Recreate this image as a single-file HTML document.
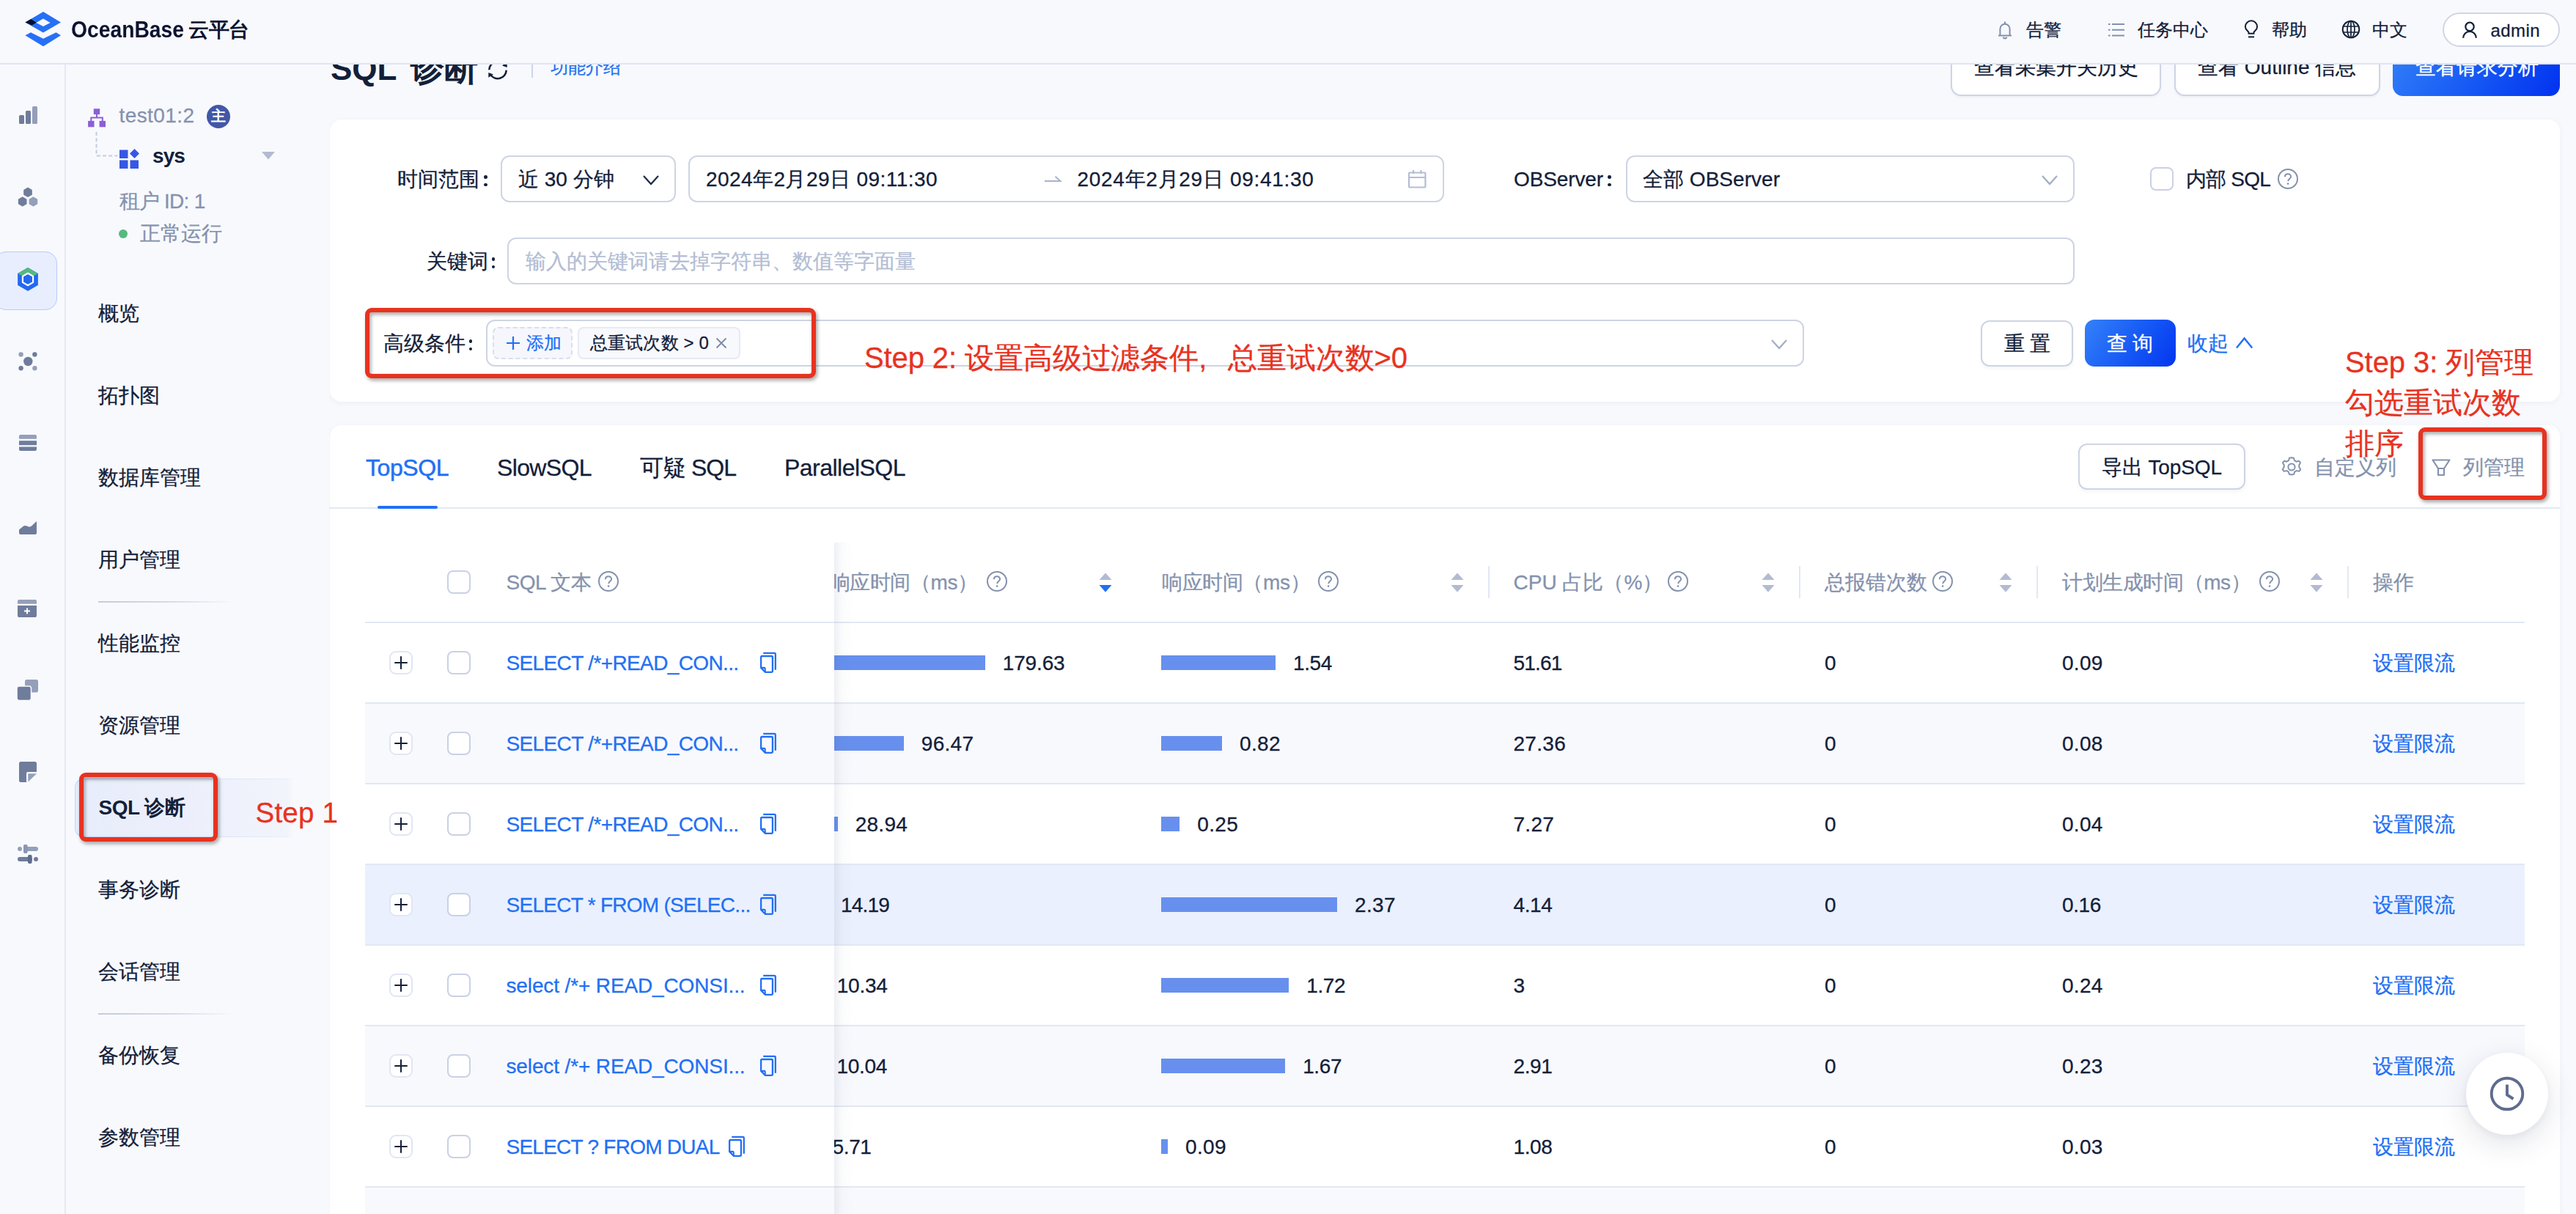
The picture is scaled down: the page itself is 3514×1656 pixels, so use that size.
<!DOCTYPE html>
<html lang="zh"><head><meta charset="utf-8"><title>OceanBase 云平台 - SQL 诊断</title>
<style>
html,body{margin:0;padding:0;width:3514px;height:1656px;overflow:hidden;background:#f8f9fd;}
body{font-family:"Liberation Sans",sans-serif;}
.root{position:relative;width:3514px;height:1656px;overflow:hidden;}
.b{position:absolute;display:block}
.t{position:absolute;white-space:nowrap;display:block;-webkit-text-stroke:0.28px currentColor}
</style></head>
<body>
<div class="root">
<span class="t" style="left:451px;top:65px;font-size:44px;line-height:56px;color:#132039;font-weight:700;-webkit-text-stroke:0;word-spacing:7px;">SQL <span style="font-size:46px">诊断</span></span>
<svg class="b" style="left:664px;top:81px;" width="30" height="30" viewBox="0 0 30 30"><path d="M26.7 14.8 A11.7 11.7 0 0 1 5 20.6" fill="none" stroke="#132039" stroke-width="2.6"/><path d="M2.3 18 V24.8 L9 20.4 Z" fill="#132039"/><path d="M3.3 14.2 A11.7 11.7 0 0 1 25 8.4" fill="none" stroke="#132039" stroke-width="2.6"/><path d="M27.7 11 V4.2 L21 8.6 Z" fill="#132039"/></svg>
<div class="b" style="left:725px;top:80px;width:2px;height:26px;background:#cdd4e4;"></div>
<span class="t" style="left:751px;top:75px;font-size:24px;line-height:34px;color:#2270f4;">功能介绍</span>
<div class="b" style="left:2661px;top:55px;width:287px;height:76px;box-sizing:border-box;border:2px solid #cdd4e4;border-radius:14px;background:#fff;box-shadow:0 2px 3px rgba(30,50,100,.05);"></div>
<span class="t" style="left:2693px;top:72px;font-size:28px;line-height:39px;color:#132039;">查看采集开关历史</span>
<div class="b" style="left:2966px;top:55px;width:281px;height:76px;box-sizing:border-box;border:2px solid #cdd4e4;border-radius:14px;background:#fff;box-shadow:0 2px 3px rgba(30,50,100,.05);"></div>
<span class="t" style="left:2998px;top:72px;font-size:28px;line-height:39px;color:#132039;">查看 Outline 信息</span>
<div class="b" style="left:3264px;top:55px;width:228px;height:76px;border-radius:14px;background:linear-gradient(120deg,#3280f8 0%,#1252f4 60%,#0232ef 100%);"></div>
<span class="t" style="left:3295px;top:72px;font-size:28px;line-height:39px;color:#fff;">查看请求分析</span>
<div class="b" style="left:449.5px;top:163px;width:3042.5px;height:385px;background:#fff;border-radius:16px;box-shadow:0 2px 8px rgba(40,60,120,.05);"></div>
<span class="t" style="left:542px;top:224.5px;font-size:28px;line-height:39px;color:#132039;">时间范围</span>
<div class="b" style="left:660.3px;top:239.4px;width:4.6px;height:4.6px;border-radius:50%;background:#132039;"></div>
<div class="b" style="left:660.3px;top:249.8px;width:4.6px;height:4.6px;border-radius:50%;background:#132039;"></div>
<div class="b" style="left:683px;top:212px;width:239px;height:64px;box-sizing:border-box;border:2px solid #cdd4e4;border-radius:12px;background:#fff;"></div>
<span class="t" style="left:707px;top:224.5px;font-size:28px;line-height:39px;color:#132039;">近 30 分钟</span>
<svg class="b" style="left:876px;top:237.5px;" width="24" height="15" viewBox="0 0 24 15"><path d="M2 2 L12 13 L22 2" fill="none" stroke="#1f2c47" stroke-width="2.2"/></svg>
<div class="b" style="left:939px;top:212px;width:1031px;height:64px;box-sizing:border-box;border:2px solid #cdd4e4;border-radius:12px;background:#fff;"></div>
<span class="t" style="letter-spacing:0.437px;left:963px;top:224.5px;font-size:28px;line-height:39px;color:#132039;">2024年2月29日 09:11:30</span>
<svg class="b" style="left:1424px;top:234px;" width="28" height="20" viewBox="0 0 28 20"><path d="M1 13 H22.5 L15.5 6.8" fill="none" stroke="#a9b3cb" stroke-width="2"/></svg>
<span class="t" style="letter-spacing:0.696px;left:1469.5px;top:224.5px;font-size:28px;line-height:39px;color:#132039;">2024年2月29日 09:41:30</span>
<svg class="b" style="left:1919px;top:230px;" width="28" height="28" viewBox="0 0 28 28"><rect x="3" y="5.5" width="22.4" height="20" rx="1" fill="none" stroke="#b3bdd4" stroke-width="2.2"/><path d="M3 12 H25.4 M9 2 V7 M19.4 2 V7" fill="none" stroke="#b3bdd4" stroke-width="2.2"/></svg>
<span class="t" style="letter-spacing:-0.117px;left:2065px;top:224.5px;font-size:28px;line-height:39px;color:#132039;">OBServer</span>
<div class="b" style="left:2193.2px;top:239.4px;width:4.6px;height:4.6px;border-radius:50%;background:#132039;"></div>
<div class="b" style="left:2193.2px;top:249.8px;width:4.6px;height:4.6px;border-radius:50%;background:#132039;"></div>
<div class="b" style="left:2217.5px;top:212px;width:612.5px;height:64px;box-sizing:border-box;border:2px solid #cdd4e4;border-radius:12px;background:#fff;"></div>
<span class="t" style="letter-spacing:0.027px;left:2241px;top:224.5px;font-size:28px;line-height:39px;color:#132039;">全部 OBServer</span>
<svg class="b" style="left:2784px;top:237.5px;" width="24" height="15" viewBox="0 0 24 15"><path d="M2 2 L12 13 L22 2" fill="none" stroke="#a3adc6" stroke-width="2.2"/></svg>
<div class="b" style="left:2933px;top:228px;width:32px;height:32px;box-sizing:border-box;border:2.2px solid #c9d1e4;border-radius:8px;background:#fff;"></div>
<span class="t" style="letter-spacing:-0.802px;left:2982px;top:224.5px;font-size:28px;line-height:39px;color:#132039;">内部 SQL</span>
<svg class="b" style="left:3106px;top:229px;" width="30" height="30" viewBox="0 0 30 30"><circle cx="15" cy="15" r="13" fill="none" stroke="#8592ad" stroke-width="2"/><path d="M10.9 12.2c0-2.4 1.8-3.9 4.1-3.9s4.1 1.5 4.1 3.7c0 2.6-3.6 3-3.9 6.1" fill="none" stroke="#8592ad" stroke-width="2"/><circle cx="15.1" cy="21.6" r="1.3" fill="#8592ad"/></svg>
<span class="t" style="left:581.5px;top:336.5px;font-size:28px;line-height:39px;color:#132039;">关键词</span>
<div class="b" style="left:670.9px;top:351.4px;width:4.6px;height:4.6px;border-radius:50%;background:#132039;"></div>
<div class="b" style="left:670.9px;top:361.8px;width:4.6px;height:4.6px;border-radius:50%;background:#132039;"></div>
<div class="b" style="left:692px;top:324px;width:2138px;height:64px;box-sizing:border-box;border:2px solid #cdd4e4;border-radius:12px;background:#fff;"></div>
<span class="t" style="left:717px;top:336.5px;font-size:28px;line-height:39px;color:#b3bdd4;">输入的关键词请去掉字符串、数值等字面量</span>
<span class="t" style="left:523px;top:448.5px;font-size:28px;line-height:39px;color:#132039;">高级条件</span>
<div class="b" style="left:639.7px;top:463.4px;width:4.6px;height:4.6px;border-radius:50%;background:#132039;"></div>
<div class="b" style="left:639.7px;top:473.8px;width:4.6px;height:4.6px;border-radius:50%;background:#132039;"></div>
<div class="b" style="left:662.5px;top:436px;width:1798.5px;height:64px;box-sizing:border-box;border:2px solid #cdd4e4;border-radius:12px;background:#fff;"></div>
<div class="b" style="left:672px;top:446px;width:109px;height:44px;box-sizing:border-box;border:2px dashed #d8deec;border-radius:8px;background:#f5f7fd;"></div>
<svg class="b" style="left:690px;top:458px;" width="20" height="20" viewBox="0 0 20 20"><path d="M10 1 V19 M1 10 H19" stroke="#2270f4" stroke-width="2.2"/></svg>
<span class="t" style="left:718px;top:451px;font-size:24px;line-height:34px;color:#2270f4;">添加</span>
<div class="b" style="left:788px;top:446px;width:221.5px;height:44px;box-sizing:border-box;border:2px solid #e6eaf4;border-radius:8px;background:#f8f9fd;"></div>
<span class="t" style="letter-spacing:0.144px;left:805px;top:451px;font-size:24px;line-height:34px;color:#132039;">总重试次数 &gt; 0</span>
<svg class="b" style="left:976px;top:460px;" width="16" height="16" viewBox="0 0 16 16"><path d="M1.5 1.5 L14.5 14.5 M14.5 1.5 L1.5 14.5" stroke="#7d89a6" stroke-width="1.8"/></svg>
<svg class="b" style="left:2415px;top:461.5px;" width="24" height="15" viewBox="0 0 24 15"><path d="M2 2 L12 13 L22 2" fill="none" stroke="#a3adc6" stroke-width="2.2"/></svg>
<div class="b" style="left:2702px;top:437px;width:126px;height:63px;box-sizing:border-box;border:2px solid #cdd4e4;border-radius:12px;background:#fff;box-shadow:0 3px 4px rgba(30,50,100,.05);"></div>
<span class="t" style="letter-spacing:-0.594px;left:2734px;top:448.5px;font-size:28px;line-height:39px;color:#132039;">重 置</span>
<div class="b" style="left:2844px;top:436px;width:124px;height:64px;border-radius:13px;background:linear-gradient(125deg,#3582f8 0%,#1558f5 55%,#0335f0 100%);"></div>
<span class="t" style="letter-spacing:-0.260px;left:2874px;top:448.5px;font-size:28px;line-height:39px;color:#fff;">查 询</span>
<span class="t" style="left:2984.3px;top:448.5px;font-size:28px;line-height:39px;color:#2270f4;">收起</span>
<svg class="b" style="left:3049px;top:456px;" width="28" height="20" viewBox="0 0 28 20"><path d="M2 18.5 L12.6 5.5 L23.2 18.5" fill="none" stroke="#2270f4" stroke-width="2.5"/></svg>
<div class="b" style="left:449.5px;top:580px;width:3042.5px;height:1120px;background:#fff;border-radius:16px;box-shadow:0 2px 8px rgba(40,60,120,.05);"></div>
<span class="t" style="letter-spacing:-0.438px;left:499px;top:615.5px;font-size:32px;line-height:45px;color:#2270f4;-webkit-text-stroke:0.5px #2270f4;">TopSQL</span>
<span class="t" style="letter-spacing:-0.627px;left:678px;top:615.5px;font-size:32px;line-height:45px;color:#132039;">SlowSQL</span>
<span class="t" style="letter-spacing:-0.987px;left:873px;top:615.5px;font-size:32px;line-height:45px;color:#132039;">可疑 SQL</span>
<span class="t" style="letter-spacing:-0.523px;left:1070px;top:615.5px;font-size:32px;line-height:45px;color:#132039;">ParallelSQL</span>
<div class="b" style="left:449px;top:692px;width:3043px;height:2px;background:#e2e8f3;"></div>
<div class="b" style="left:514.5px;top:690px;width:82.5px;height:4px;background:#2270f4;border-radius:2px;"></div>
<div class="b" style="left:2834.5px;top:605px;width:228.5px;height:63px;box-sizing:border-box;border:2px solid #cdd4e4;border-radius:12px;background:#fff;box-shadow:0 3px 4px rgba(30,50,100,.05);"></div>
<span class="t" style="letter-spacing:-0.106px;left:2867px;top:617.5px;font-size:28px;line-height:39px;color:#132039;">导出 TopSQL</span>
<svg class="b" style="left:3111px;top:622px;" width="30" height="30" viewBox="0 0 30 30"><path d="M15 2.2 l3 0.6 1 3.4 2.6 1.5 3.4-0.9 2 2.4-1.7 3.1 0 3 1.9 3-1.9 2.6-3.5-0.8-2.6 1.5-1.1 3.4-3.1 0.6-3.1-0.6-1.1-3.4-2.6-1.5-3.5 0.8-1.9-2.6 1.9-3 0-3-1.7-3.1 2-2.4 3.4 0.9 2.6-1.5 1-3.4 Z" fill="none" stroke="#8592ad" stroke-width="2" stroke-linejoin="round"/><circle cx="15" cy="15" r="4.6" fill="none" stroke="#8592ad" stroke-width="2"/></svg>
<span class="t" style="left:3156.5px;top:617.5px;font-size:28px;line-height:39px;color:#8592ad;">自定义列</span>
<svg class="b" style="left:3316px;top:624px;" width="28" height="28" viewBox="0 0 28 28"><path d="M2.5 3.5 H25.5 L18 15 H10 Z M10 15 V24 H18 V15" fill="none" stroke="#8592ad" stroke-width="2.2" stroke-linejoin="round"/></svg>
<span class="t" style="left:3360px;top:617.5px;font-size:28px;line-height:39px;color:#8592ad;">列管理</span>
<div class="b" style="left:498px;top:849px;width:2946px;height:110px;background:#fff;"></div>
<div class="b" style="left:498px;top:959px;width:2946px;height:110px;background:#f8f9fd;"></div>
<div class="b" style="left:498px;top:1069px;width:2946px;height:110px;background:#fff;"></div>
<div class="b" style="left:498px;top:1179px;width:2946px;height:110px;background:#eaf0fd;"></div>
<div class="b" style="left:498px;top:1289px;width:2946px;height:110px;background:#fff;"></div>
<div class="b" style="left:498px;top:1399px;width:2946px;height:110px;background:#f8f9fd;"></div>
<div class="b" style="left:498px;top:1509px;width:2946px;height:110px;background:#fff;"></div>
<div class="b" style="left:498px;top:1619px;width:2946px;height:110px;background:#f8f9fd;"></div>
<div class="b" style="left:498px;top:848px;width:2946px;height:2px;background:#e2e8f3;"></div>
<div class="b" style="left:498px;top:958px;width:2946px;height:2px;background:#e2e8f3;"></div>
<div class="b" style="left:498px;top:1068px;width:2946px;height:2px;background:#e2e8f3;"></div>
<div class="b" style="left:498px;top:1178px;width:2946px;height:2px;background:#e2e8f3;"></div>
<div class="b" style="left:498px;top:1288px;width:2946px;height:2px;background:#e2e8f3;"></div>
<div class="b" style="left:498px;top:1398px;width:2946px;height:2px;background:#e2e8f3;"></div>
<div class="b" style="left:498px;top:1508px;width:2946px;height:2px;background:#e2e8f3;"></div>
<div class="b" style="left:498px;top:1618px;width:2946px;height:2px;background:#e2e8f3;"></div>
<div class="b" style="left:498px;top:1728px;width:2946px;height:2px;background:#e2e8f3;"></div>
<span class="t" style="left:1104px;top:774.5px;font-size:28px;line-height:39px;color:#8592ad;letter-spacing:-0.4px;">总响应时间（ms）</span>
<svg class="b" style="left:1345px;top:778px;" width="30" height="30" viewBox="0 0 30 30"><circle cx="15" cy="15" r="13" fill="none" stroke="#8592ad" stroke-width="2"/><path d="M10.9 12.2c0-2.4 1.8-3.9 4.1-3.9s4.1 1.5 4.1 3.7c0 2.6-3.6 3-3.9 6.1" fill="none" stroke="#8592ad" stroke-width="2"/><circle cx="15.1" cy="21.6" r="1.3" fill="#8592ad"/></svg>
<svg class="b" style="left:1499px;top:781px;" width="18" height="28" viewBox="0 0 18 28"><path d="M9 0.4 L17.5 10 H0.5 Z" fill="#b3bbd1"/><path d="M0.5 17 H17.5 L9 26.8 Z" fill="#2270f4"/></svg>
<span class="t" style="left:1585px;top:774.5px;font-size:28px;line-height:39px;color:#8592ad;letter-spacing:-0.4px;">响应时间（ms）</span>
<svg class="b" style="left:1797px;top:778px;" width="30" height="30" viewBox="0 0 30 30"><circle cx="15" cy="15" r="13" fill="none" stroke="#8592ad" stroke-width="2"/><path d="M10.9 12.2c0-2.4 1.8-3.9 4.1-3.9s4.1 1.5 4.1 3.7c0 2.6-3.6 3-3.9 6.1" fill="none" stroke="#8592ad" stroke-width="2"/><circle cx="15.1" cy="21.6" r="1.3" fill="#8592ad"/></svg>
<svg class="b" style="left:1979px;top:781px;" width="18" height="28" viewBox="0 0 18 28"><path d="M9 0.4 L17.5 10 H0.5 Z" fill="#b3bbd1"/><path d="M0.5 17 H17.5 L9 26.8 Z" fill="#b3bbd1"/></svg>
<span class="t" style="left:2064.5px;top:774.5px;font-size:28px;line-height:39px;color:#8592ad;">CPU 占比（%）</span>
<svg class="b" style="left:2274px;top:778px;" width="30" height="30" viewBox="0 0 30 30"><circle cx="15" cy="15" r="13" fill="none" stroke="#8592ad" stroke-width="2"/><path d="M10.9 12.2c0-2.4 1.8-3.9 4.1-3.9s4.1 1.5 4.1 3.7c0 2.6-3.6 3-3.9 6.1" fill="none" stroke="#8592ad" stroke-width="2"/><circle cx="15.1" cy="21.6" r="1.3" fill="#8592ad"/></svg>
<svg class="b" style="left:2403px;top:781px;" width="18" height="28" viewBox="0 0 18 28"><path d="M9 0.4 L17.5 10 H0.5 Z" fill="#b3bbd1"/><path d="M0.5 17 H17.5 L9 26.8 Z" fill="#b3bbd1"/></svg>
<span class="t" style="left:2489px;top:774.5px;font-size:28px;line-height:39px;color:#8592ad;">总报错次数</span>
<svg class="b" style="left:2635px;top:778px;" width="30" height="30" viewBox="0 0 30 30"><circle cx="15" cy="15" r="13" fill="none" stroke="#8592ad" stroke-width="2"/><path d="M10.9 12.2c0-2.4 1.8-3.9 4.1-3.9s4.1 1.5 4.1 3.7c0 2.6-3.6 3-3.9 6.1" fill="none" stroke="#8592ad" stroke-width="2"/><circle cx="15.1" cy="21.6" r="1.3" fill="#8592ad"/></svg>
<svg class="b" style="left:2727px;top:781px;" width="18" height="28" viewBox="0 0 18 28"><path d="M9 0.4 L17.5 10 H0.5 Z" fill="#b3bbd1"/><path d="M0.5 17 H17.5 L9 26.8 Z" fill="#b3bbd1"/></svg>
<span class="t" style="left:2813px;top:774.5px;font-size:28px;line-height:39px;color:#8592ad;letter-spacing:-0.4px;">计划生成时间（ms）</span>
<svg class="b" style="left:3081px;top:778px;" width="30" height="30" viewBox="0 0 30 30"><circle cx="15" cy="15" r="13" fill="none" stroke="#8592ad" stroke-width="2"/><path d="M10.9 12.2c0-2.4 1.8-3.9 4.1-3.9s4.1 1.5 4.1 3.7c0 2.6-3.6 3-3.9 6.1" fill="none" stroke="#8592ad" stroke-width="2"/><circle cx="15.1" cy="21.6" r="1.3" fill="#8592ad"/></svg>
<svg class="b" style="left:3151px;top:781px;" width="18" height="28" viewBox="0 0 18 28"><path d="M9 0.4 L17.5 10 H0.5 Z" fill="#b3bbd1"/><path d="M0.5 17 H17.5 L9 26.8 Z" fill="#b3bbd1"/></svg>
<span class="t" style="left:3237px;top:774.5px;font-size:28px;line-height:39px;color:#8592ad;">操作</span>
<div class="b" style="left:2030px;top:772px;width:2px;height:44px;background:#e2e8f3;"></div>
<div class="b" style="left:2454px;top:772px;width:2px;height:44px;background:#e2e8f3;"></div>
<div class="b" style="left:2778px;top:772px;width:2px;height:44px;background:#e2e8f3;"></div>
<div class="b" style="left:3202px;top:772px;width:2px;height:44px;background:#e2e8f3;"></div>
<div class="b" style="left:1104px;top:894px;width:239.806px;height:20px;background:#6790ee;"></div>
<span class="t" style="letter-spacing:-0.167px;left:1367.81px;top:884.5px;font-size:28px;line-height:39px;color:#132039;">179.63</span>
<div class="b" style="left:1584px;top:894px;width:156.002px;height:20px;background:#6790ee;"></div>
<span class="t" style="letter-spacing:-0.400px;left:1764px;top:884.5px;font-size:28px;line-height:39px;color:#132039;">1.54</span>
<span class="t" style="letter-spacing:-0.820px;left:2064.5px;top:884.5px;font-size:28px;line-height:39px;color:#132039;">51.61</span>
<span class="t" style="left:2489px;top:884.5px;font-size:28px;line-height:39px;color:#132039;">0</span>
<span class="t" style="letter-spacing:0.300px;left:2813px;top:884.5px;font-size:28px;line-height:39px;color:#132039;">0.09</span>
<span class="t" style="left:3237px;top:884.5px;font-size:28px;line-height:39px;color:#2270f4;">设置限流</span>
<div class="b" style="left:1104px;top:1004px;width:128.787px;height:20px;background:#6790ee;"></div>
<span class="t" style="letter-spacing:0.300px;left:1256.79px;top:994.5px;font-size:28px;line-height:39px;color:#132039;">96.47</span>
<div class="b" style="left:1584px;top:1004px;width:83.066px;height:20px;background:#6790ee;"></div>
<span class="t" style="letter-spacing:0.300px;left:1691.07px;top:994.5px;font-size:28px;line-height:39px;color:#132039;">0.82</span>
<span class="t" style="letter-spacing:0.300px;left:2064.5px;top:994.5px;font-size:28px;line-height:39px;color:#132039;">27.36</span>
<span class="t" style="left:2489px;top:994.5px;font-size:28px;line-height:39px;color:#132039;">0</span>
<span class="t" style="letter-spacing:0.300px;left:2813px;top:994.5px;font-size:28px;line-height:39px;color:#132039;">0.08</span>
<span class="t" style="left:3237px;top:994.5px;font-size:28px;line-height:39px;color:#2270f4;">设置限流</span>
<div class="b" style="left:1104px;top:1114px;width:38.6349px;height:20px;background:#6790ee;"></div>
<span class="t" style="letter-spacing:0.300px;left:1166.63px;top:1104.5px;font-size:28px;line-height:39px;color:#132039;">28.94</span>
<div class="b" style="left:1584px;top:1114px;width:25.325px;height:20px;background:#6790ee;"></div>
<span class="t" style="letter-spacing:0.300px;left:1633.33px;top:1104.5px;font-size:28px;line-height:39px;color:#132039;">0.25</span>
<span class="t" style="letter-spacing:0.300px;left:2064.5px;top:1104.5px;font-size:28px;line-height:39px;color:#132039;">7.27</span>
<span class="t" style="left:2489px;top:1104.5px;font-size:28px;line-height:39px;color:#132039;">0</span>
<span class="t" style="letter-spacing:0.300px;left:2813px;top:1104.5px;font-size:28px;line-height:39px;color:#132039;">0.04</span>
<span class="t" style="left:3237px;top:1104.5px;font-size:28px;line-height:39px;color:#2270f4;">设置限流</span>
<div class="b" style="left:1104px;top:1224px;width:18.9436px;height:20px;background:#6790ee;"></div>
<span class="t" style="letter-spacing:-0.820px;left:1146.94px;top:1214.5px;font-size:28px;line-height:39px;color:#132039;">14.19</span>
<div class="b" style="left:1584px;top:1224px;width:240.081px;height:20px;background:#6790ee;"></div>
<span class="t" style="letter-spacing:0.300px;left:1848.08px;top:1214.5px;font-size:28px;line-height:39px;color:#132039;">2.37</span>
<span class="t" style="letter-spacing:-0.400px;left:2064.5px;top:1214.5px;font-size:28px;line-height:39px;color:#132039;">4.14</span>
<span class="t" style="left:2489px;top:1214.5px;font-size:28px;line-height:39px;color:#132039;">0</span>
<span class="t" style="letter-spacing:-0.400px;left:2813px;top:1214.5px;font-size:28px;line-height:39px;color:#132039;">0.16</span>
<span class="t" style="left:3237px;top:1214.5px;font-size:28px;line-height:39px;color:#2270f4;">设置限流</span>
<div class="b" style="left:1104px;top:1334px;width:13.8039px;height:20px;background:#6790ee;"></div>
<span class="t" style="letter-spacing:-0.260px;left:1141.8px;top:1324.5px;font-size:28px;line-height:39px;color:#132039;">10.34</span>
<div class="b" style="left:1584px;top:1334px;width:174.236px;height:20px;background:#6790ee;"></div>
<span class="t" style="letter-spacing:-0.400px;left:1782.24px;top:1324.5px;font-size:28px;line-height:39px;color:#132039;">1.72</span>
<span class="t" style="letter-spacing:0.300px;left:2064.5px;top:1324.5px;font-size:28px;line-height:39px;color:#132039;">3</span>
<span class="t" style="left:2489px;top:1324.5px;font-size:28px;line-height:39px;color:#132039;">0</span>
<span class="t" style="letter-spacing:0.300px;left:2813px;top:1324.5px;font-size:28px;line-height:39px;color:#132039;">0.24</span>
<span class="t" style="left:3237px;top:1324.5px;font-size:28px;line-height:39px;color:#2270f4;">设置限流</span>
<div class="b" style="left:1104px;top:1444px;width:13.4034px;height:20px;background:#6790ee;"></div>
<span class="t" style="letter-spacing:-0.260px;left:1141.4px;top:1434.5px;font-size:28px;line-height:39px;color:#132039;">10.04</span>
<div class="b" style="left:1584px;top:1444px;width:169.171px;height:20px;background:#6790ee;"></div>
<span class="t" style="letter-spacing:-0.400px;left:1777.17px;top:1434.5px;font-size:28px;line-height:39px;color:#132039;">1.67</span>
<span class="t" style="letter-spacing:-0.400px;left:2064.5px;top:1434.5px;font-size:28px;line-height:39px;color:#132039;">2.91</span>
<span class="t" style="left:2489px;top:1434.5px;font-size:28px;line-height:39px;color:#132039;">0</span>
<span class="t" style="letter-spacing:0.300px;left:2813px;top:1434.5px;font-size:28px;line-height:39px;color:#132039;">0.23</span>
<span class="t" style="left:3237px;top:1434.5px;font-size:28px;line-height:39px;color:#2270f4;">设置限流</span>
<div class="b" style="left:1104px;top:1554px;width:7.62285px;height:20px;background:#6790ee;"></div>
<span class="t" style="letter-spacing:-0.400px;left:1135.62px;top:1544.5px;font-size:28px;line-height:39px;color:#132039;">5.71</span>
<div class="b" style="left:1584px;top:1554px;width:9.117px;height:20px;background:#6790ee;"></div>
<span class="t" style="letter-spacing:0.300px;left:1617.12px;top:1544.5px;font-size:28px;line-height:39px;color:#132039;">0.09</span>
<span class="t" style="letter-spacing:-0.400px;left:2064.5px;top:1544.5px;font-size:28px;line-height:39px;color:#132039;">1.08</span>
<span class="t" style="left:2489px;top:1544.5px;font-size:28px;line-height:39px;color:#132039;">0</span>
<span class="t" style="letter-spacing:0.300px;left:2813px;top:1544.5px;font-size:28px;line-height:39px;color:#132039;">0.03</span>
<span class="t" style="left:3237px;top:1544.5px;font-size:28px;line-height:39px;color:#2270f4;">设置限流</span>
<div class="b" style="left:498px;top:740px;width:640px;height:109px;background:#fff;"></div>
<div class="b" style="left:498px;top:850px;width:640px;height:108px;background:#fff;"></div>
<div class="b" style="left:498px;top:960px;width:640px;height:108px;background:#f8f9fd;"></div>
<div class="b" style="left:498px;top:1070px;width:640px;height:108px;background:#fff;"></div>
<div class="b" style="left:498px;top:1180px;width:640px;height:108px;background:#eaf0fd;"></div>
<div class="b" style="left:498px;top:1290px;width:640px;height:108px;background:#fff;"></div>
<div class="b" style="left:498px;top:1400px;width:640px;height:108px;background:#f8f9fd;"></div>
<div class="b" style="left:498px;top:1510px;width:640px;height:108px;background:#fff;"></div>
<div class="b" style="left:498px;top:1620px;width:640px;height:108px;background:#f8f9fd;"></div>
<div class="b" style="left:498px;top:848px;width:640px;height:2px;background:#e2e8f3;"></div>
<div class="b" style="left:498px;top:958px;width:640px;height:2px;background:#e2e8f3;"></div>
<div class="b" style="left:498px;top:1068px;width:640px;height:2px;background:#e2e8f3;"></div>
<div class="b" style="left:498px;top:1178px;width:640px;height:2px;background:#e2e8f3;"></div>
<div class="b" style="left:498px;top:1288px;width:640px;height:2px;background:#e2e8f3;"></div>
<div class="b" style="left:498px;top:1398px;width:640px;height:2px;background:#e2e8f3;"></div>
<div class="b" style="left:498px;top:1508px;width:640px;height:2px;background:#e2e8f3;"></div>
<div class="b" style="left:498px;top:1618px;width:640px;height:2px;background:#e2e8f3;"></div>
<div class="b" style="left:498px;top:1728px;width:640px;height:2px;background:#e2e8f3;"></div>
<div class="b" style="left:1138px;top:740px;width:26px;height:960px;background:linear-gradient(90deg,rgba(30,50,110,.075),rgba(30,50,110,.02) 40%,rgba(30,50,110,0));"></div>
<div class="b" style="left:610px;top:778px;width:32px;height:32px;box-sizing:border-box;border:2.2px solid #c9d1e4;border-radius:8px;background:#fff;"></div>
<span class="t" style="letter-spacing:-0.464px;left:690.5px;top:774.5px;font-size:28px;line-height:39px;color:#8592ad;">SQL 文本</span>
<svg class="b" style="left:815px;top:778px;" width="30" height="30" viewBox="0 0 30 30"><circle cx="15" cy="15" r="13" fill="none" stroke="#8592ad" stroke-width="2"/><path d="M10.9 12.2c0-2.4 1.8-3.9 4.1-3.9s4.1 1.5 4.1 3.7c0 2.6-3.6 3-3.9 6.1" fill="none" stroke="#8592ad" stroke-width="2"/><circle cx="15.1" cy="21.6" r="1.3" fill="#8592ad"/></svg>
<div class="b" style="left:531px;top:888px;width:32px;height:32px;box-sizing:border-box;border:2px solid #e0e6f3;border-radius:9px;background:#fff;"><i style="position:absolute;left:5px;top:12.8px;width:18px;height:2.4px;border-radius:1.2px;background:#132039"></i><i style="position:absolute;left:12.8px;top:5px;width:2.4px;height:18px;border-radius:1.2px;background:#132039"></i></div>
<div class="b" style="left:610px;top:888px;width:32px;height:32px;box-sizing:border-box;border:2.2px solid #c9d1e4;border-radius:8px;background:#fff;"></div>
<span class="t" style="letter-spacing:-0.626px;left:690.5px;top:884.5px;font-size:28px;line-height:39px;color:#2270f4;">SELECT /*+READ_CON...</span>
<svg class="b" style="left:1036px;top:889px;" width="24" height="30" viewBox="0 0 24 30"><path d="M5.2 1.9 H20.5 a1.3 1.3 0 0 1 1.3 1.3 V24.8" fill="none" stroke="#2270f4" stroke-width="2.3"/><path d="M2.1 21.9 V7.5 a1.5 1.5 0 0 1 1.5 -1.5 H16.4 a1.5 1.5 0 0 1 1.5 1.5 V26.3 a1.5 1.5 0 0 1 -1.5 1.5 H7.7 Z" fill="none" stroke="#2270f4" stroke-width="2.3" stroke-linejoin="round"/><path d="M2.1 21.9 H6.5 a1.2 1.2 0 0 1 1.2 1.2 V27.8" fill="none" stroke="#2270f4" stroke-width="2.1"/></svg>
<div class="b" style="left:531px;top:998px;width:32px;height:32px;box-sizing:border-box;border:2px solid #e0e6f3;border-radius:9px;background:#fff;"><i style="position:absolute;left:5px;top:12.8px;width:18px;height:2.4px;border-radius:1.2px;background:#132039"></i><i style="position:absolute;left:12.8px;top:5px;width:2.4px;height:18px;border-radius:1.2px;background:#132039"></i></div>
<div class="b" style="left:610px;top:998px;width:32px;height:32px;box-sizing:border-box;border:2.2px solid #c9d1e4;border-radius:8px;background:#fff;"></div>
<span class="t" style="letter-spacing:-0.626px;left:690.5px;top:994.5px;font-size:28px;line-height:39px;color:#2270f4;">SELECT /*+READ_CON...</span>
<svg class="b" style="left:1036px;top:999px;" width="24" height="30" viewBox="0 0 24 30"><path d="M5.2 1.9 H20.5 a1.3 1.3 0 0 1 1.3 1.3 V24.8" fill="none" stroke="#2270f4" stroke-width="2.3"/><path d="M2.1 21.9 V7.5 a1.5 1.5 0 0 1 1.5 -1.5 H16.4 a1.5 1.5 0 0 1 1.5 1.5 V26.3 a1.5 1.5 0 0 1 -1.5 1.5 H7.7 Z" fill="none" stroke="#2270f4" stroke-width="2.3" stroke-linejoin="round"/><path d="M2.1 21.9 H6.5 a1.2 1.2 0 0 1 1.2 1.2 V27.8" fill="none" stroke="#2270f4" stroke-width="2.1"/></svg>
<div class="b" style="left:531px;top:1108px;width:32px;height:32px;box-sizing:border-box;border:2px solid #e0e6f3;border-radius:9px;background:#fff;"><i style="position:absolute;left:5px;top:12.8px;width:18px;height:2.4px;border-radius:1.2px;background:#132039"></i><i style="position:absolute;left:12.8px;top:5px;width:2.4px;height:18px;border-radius:1.2px;background:#132039"></i></div>
<div class="b" style="left:610px;top:1108px;width:32px;height:32px;box-sizing:border-box;border:2.2px solid #c9d1e4;border-radius:8px;background:#fff;"></div>
<span class="t" style="letter-spacing:-0.626px;left:690.5px;top:1104.5px;font-size:28px;line-height:39px;color:#2270f4;">SELECT /*+READ_CON...</span>
<svg class="b" style="left:1036px;top:1109px;" width="24" height="30" viewBox="0 0 24 30"><path d="M5.2 1.9 H20.5 a1.3 1.3 0 0 1 1.3 1.3 V24.8" fill="none" stroke="#2270f4" stroke-width="2.3"/><path d="M2.1 21.9 V7.5 a1.5 1.5 0 0 1 1.5 -1.5 H16.4 a1.5 1.5 0 0 1 1.5 1.5 V26.3 a1.5 1.5 0 0 1 -1.5 1.5 H7.7 Z" fill="none" stroke="#2270f4" stroke-width="2.3" stroke-linejoin="round"/><path d="M2.1 21.9 H6.5 a1.2 1.2 0 0 1 1.2 1.2 V27.8" fill="none" stroke="#2270f4" stroke-width="2.1"/></svg>
<div class="b" style="left:531px;top:1218px;width:32px;height:32px;box-sizing:border-box;border:2px solid #e0e6f3;border-radius:9px;background:#fff;"><i style="position:absolute;left:5px;top:12.8px;width:18px;height:2.4px;border-radius:1.2px;background:#132039"></i><i style="position:absolute;left:12.8px;top:5px;width:2.4px;height:18px;border-radius:1.2px;background:#132039"></i></div>
<div class="b" style="left:610px;top:1218px;width:32px;height:32px;box-sizing:border-box;border:2.2px solid #c9d1e4;border-radius:8px;background:#fff;"></div>
<span class="t" style="letter-spacing:-0.720px;left:690.5px;top:1214.5px;font-size:28px;line-height:39px;color:#2270f4;">SELECT * FROM (SELEC...</span>
<svg class="b" style="left:1036px;top:1219px;" width="24" height="30" viewBox="0 0 24 30"><path d="M5.2 1.9 H20.5 a1.3 1.3 0 0 1 1.3 1.3 V24.8" fill="none" stroke="#2270f4" stroke-width="2.3"/><path d="M2.1 21.9 V7.5 a1.5 1.5 0 0 1 1.5 -1.5 H16.4 a1.5 1.5 0 0 1 1.5 1.5 V26.3 a1.5 1.5 0 0 1 -1.5 1.5 H7.7 Z" fill="none" stroke="#2270f4" stroke-width="2.3" stroke-linejoin="round"/><path d="M2.1 21.9 H6.5 a1.2 1.2 0 0 1 1.2 1.2 V27.8" fill="none" stroke="#2270f4" stroke-width="2.1"/></svg>
<div class="b" style="left:531px;top:1328px;width:32px;height:32px;box-sizing:border-box;border:2px solid #e0e6f3;border-radius:9px;background:#fff;"><i style="position:absolute;left:5px;top:12.8px;width:18px;height:2.4px;border-radius:1.2px;background:#132039"></i><i style="position:absolute;left:12.8px;top:5px;width:2.4px;height:18px;border-radius:1.2px;background:#132039"></i></div>
<div class="b" style="left:610px;top:1328px;width:32px;height:32px;box-sizing:border-box;border:2.2px solid #c9d1e4;border-radius:8px;background:#fff;"></div>
<span class="t" style="letter-spacing:-0.130px;left:690.5px;top:1324.5px;font-size:28px;line-height:39px;color:#2270f4;">select /*+ READ_CONSI...</span>
<svg class="b" style="left:1036px;top:1329px;" width="24" height="30" viewBox="0 0 24 30"><path d="M5.2 1.9 H20.5 a1.3 1.3 0 0 1 1.3 1.3 V24.8" fill="none" stroke="#2270f4" stroke-width="2.3"/><path d="M2.1 21.9 V7.5 a1.5 1.5 0 0 1 1.5 -1.5 H16.4 a1.5 1.5 0 0 1 1.5 1.5 V26.3 a1.5 1.5 0 0 1 -1.5 1.5 H7.7 Z" fill="none" stroke="#2270f4" stroke-width="2.3" stroke-linejoin="round"/><path d="M2.1 21.9 H6.5 a1.2 1.2 0 0 1 1.2 1.2 V27.8" fill="none" stroke="#2270f4" stroke-width="2.1"/></svg>
<div class="b" style="left:531px;top:1438px;width:32px;height:32px;box-sizing:border-box;border:2px solid #e0e6f3;border-radius:9px;background:#fff;"><i style="position:absolute;left:5px;top:12.8px;width:18px;height:2.4px;border-radius:1.2px;background:#132039"></i><i style="position:absolute;left:12.8px;top:5px;width:2.4px;height:18px;border-radius:1.2px;background:#132039"></i></div>
<div class="b" style="left:610px;top:1438px;width:32px;height:32px;box-sizing:border-box;border:2.2px solid #c9d1e4;border-radius:8px;background:#fff;"></div>
<span class="t" style="letter-spacing:-0.130px;left:690.5px;top:1434.5px;font-size:28px;line-height:39px;color:#2270f4;">select /*+ READ_CONSI...</span>
<svg class="b" style="left:1036px;top:1439px;" width="24" height="30" viewBox="0 0 24 30"><path d="M5.2 1.9 H20.5 a1.3 1.3 0 0 1 1.3 1.3 V24.8" fill="none" stroke="#2270f4" stroke-width="2.3"/><path d="M2.1 21.9 V7.5 a1.5 1.5 0 0 1 1.5 -1.5 H16.4 a1.5 1.5 0 0 1 1.5 1.5 V26.3 a1.5 1.5 0 0 1 -1.5 1.5 H7.7 Z" fill="none" stroke="#2270f4" stroke-width="2.3" stroke-linejoin="round"/><path d="M2.1 21.9 H6.5 a1.2 1.2 0 0 1 1.2 1.2 V27.8" fill="none" stroke="#2270f4" stroke-width="2.1"/></svg>
<div class="b" style="left:531px;top:1548px;width:32px;height:32px;box-sizing:border-box;border:2px solid #e0e6f3;border-radius:9px;background:#fff;"><i style="position:absolute;left:5px;top:12.8px;width:18px;height:2.4px;border-radius:1.2px;background:#132039"></i><i style="position:absolute;left:12.8px;top:5px;width:2.4px;height:18px;border-radius:1.2px;background:#132039"></i></div>
<div class="b" style="left:610px;top:1548px;width:32px;height:32px;box-sizing:border-box;border:2.2px solid #c9d1e4;border-radius:8px;background:#fff;"></div>
<span class="t" style="letter-spacing:-0.747px;left:690.5px;top:1544.5px;font-size:28px;line-height:39px;color:#2270f4;">SELECT ? FROM DUAL</span>
<svg class="b" style="left:993px;top:1549px;" width="24" height="30" viewBox="0 0 24 30"><path d="M5.2 1.9 H20.5 a1.3 1.3 0 0 1 1.3 1.3 V24.8" fill="none" stroke="#2270f4" stroke-width="2.3"/><path d="M2.1 21.9 V7.5 a1.5 1.5 0 0 1 1.5 -1.5 H16.4 a1.5 1.5 0 0 1 1.5 1.5 V26.3 a1.5 1.5 0 0 1 -1.5 1.5 H7.7 Z" fill="none" stroke="#2270f4" stroke-width="2.3" stroke-linejoin="round"/><path d="M2.1 21.9 H6.5 a1.2 1.2 0 0 1 1.2 1.2 V27.8" fill="none" stroke="#2270f4" stroke-width="2.1"/></svg>
<div class="b" style="left:0px;top:86px;width:449px;height:1570px;background:#f8f9fd;"></div>
<div class="b" style="left:88px;top:86px;width:2px;height:1570px;background:#e4e9f4;"></div>
<svg class="b" style="left:24px;top:143px;" width="30" height="28" viewBox="0 0 30 28"><rect x="2" y="14" width="7" height="12" rx="1.5" fill="#6f7c9b"/><rect x="11" y="8" width="7" height="18" rx="1.5" fill="#6f7c9b"/><rect x="20" y="2" width="7" height="24" rx="1.5" fill="#949fb9"/></svg>
<svg class="b" style="left:20px;top:252px;" width="36" height="34" viewBox="0 0 36 34"><path d="M18.00 4.50 L23.02 7.40 L23.02 13.20 L18.00 16.10 L12.98 13.20 L12.98 7.40 Z" fill="#6f7c9b" stroke="#6f7c9b" stroke-width="1.6" stroke-linejoin="round"/><path d="M10.70 17.20 L15.72 20.10 L15.72 25.90 L10.70 28.80 L5.68 25.90 L5.68 20.10 Z" fill="#6f7c9b" stroke="#6f7c9b" stroke-width="1.6" stroke-linejoin="round"/><path d="M25.40 17.20 L30.42 20.10 L30.42 25.90 L25.40 28.80 L20.38 25.90 L20.38 20.10 Z" fill="#949fb9" stroke="#949fb9" stroke-width="1.6" stroke-linejoin="round"/></svg>
<div class="b" style="left:-8px;top:343px;width:86px;height:80px;box-sizing:border-box;border:1.5px solid #b6cbfb;border-radius:16px;background:#e8eefd;"></div>
<svg class="b" style="left:22px;top:364px;" width="32" height="34" viewBox="0 0 32 34"><path d="M16.00 1.00 L29.86 9.00 L29.86 25.00 L16.00 33.00 L2.14 25.00 L2.14 9.00 Z" fill="#2468f2"/><path d="M16 1 L29.86 9 L16 17 L2.14 9 Z" fill="#54b97f"/><path d="M16.00 8.80 L23.10 12.90 L23.10 21.10 L16.00 25.20 L8.90 21.10 L8.90 12.90 Z" fill="#2468f2" stroke="#fff" stroke-width="2.2" stroke-linejoin="round"/></svg>
<svg class="b" style="left:22px;top:477px;" width="32" height="32" viewBox="0 0 32 32"><circle cx="16.3" cy="16" r="6.2" fill="#6f7c9b"/><circle cx="6.6" cy="6.5" r="3.2" fill="#949fb9"/><circle cx="25.4" cy="6.5" r="3.2" fill="#6f7c9b"/><circle cx="6.6" cy="25.3" r="3.2" fill="#6f7c9b"/><circle cx="25.4" cy="25.3" r="3.2" fill="#949fb9"/></svg>
<svg class="b" style="left:26px;top:593px;" width="24" height="22" viewBox="0 0 24 22"><path d="M0 2 a2 2 0 0 1 2 -2 H22 a2 2 0 0 1 2 2 V5.8 H0 Z" fill="#949fb9"/><rect x="0" y="8.2" width="24" height="6" fill="#6f7c9b"/><path d="M0 16.4 H24 V20 a2 2 0 0 1 -2 2 H2 a2 2 0 0 1 -2 -2 Z" fill="#6f7c9b"/></svg>
<svg class="b" style="left:26px;top:710px;" width="24" height="20" viewBox="0 0 24 20"><path d="M0 12.5 L5.5 8 Q8.5 6 11 7.8 Q14.5 9.6 17 7.5 L24 1 V17 a2 2 0 0 1 -2 2 H2 a2 2 0 0 1 -2 -2 Z" fill="#6f7c9b"/></svg>
<svg class="b" style="left:24px;top:818px;" width="26" height="24" viewBox="0 0 26 24"><path d="M0 2 a2 2 0 0 1 2 -2 H24 a2 2 0 0 1 2 2 V5.7 H0 Z" fill="#949fb9"/><path d="M0 8 H26 V22 a2 2 0 0 1 -2 2 H2 a2 2 0 0 1 -2 -2 Z" fill="#6f7c9b"/><path d="M13 11.4 V19.4 M9 15.4 H17" stroke="#fff" stroke-width="2"/></svg>
<svg class="b" style="left:23px;top:926px;" width="30" height="30" viewBox="0 0 30 30"><rect x="11" y="1" width="18" height="17.6" rx="2.5" fill="#949fb9"/><rect x="0" y="10" width="19.5" height="19.5" rx="3" fill="#6f7c9b" stroke="#f8f9fd" stroke-width="1.6"/></svg>
<svg class="b" style="left:26px;top:1039px;" width="24" height="28" viewBox="0 0 24 28"><path d="M0 2.5 a2.5 2.5 0 0 1 2.5 -2.5 H21.5 a2.5 2.5 0 0 1 2.5 2.5 V14 H12 a2 2 0 0 0 -2 2 V28 H2.5 a2.5 2.5 0 0 1 -2.5 -2.5 Z" fill="#6f7c9b"/><path d="M12.3 16.2 H24 L12.3 27.4 Z" fill="#949fb9"/></svg>
<svg class="b" style="left:23px;top:1150px;" width="30" height="30" viewBox="0 0 30 30"><rect x="1" y="5" width="6" height="6" rx="3" fill="#949fb9"/><rect x="9" y="5" width="20" height="6" rx="3" fill="#949fb9"/><rect x="9" y="2" width="5.6" height="12" rx="2" fill="#8a96b1"/><rect x="1" y="19" width="20" height="6" rx="3" fill="#6f7c9b"/><rect x="23" y="19" width="6" height="6" rx="3" fill="#6f7c9b"/><rect x="15" y="16" width="5.6" height="12" rx="2" fill="#5f6c8c"/></svg>
<svg class="b" style="left:120px;top:148px;" width="25" height="26" viewBox="0 0 25 26"><rect x="7.8" y="0.3" width="8.4" height="7.8" fill="#8b5fd6"/><rect x="0.1" y="16.9" width="8.4" height="8.4" fill="#8b5fd6"/><rect x="15.6" y="16.9" width="8.4" height="8.4" fill="#8b5fd6"/><path d="M12 8 V12.6 M4.3 17 V12.6 H19.8 V17" fill="none" stroke="#8b5fd6" stroke-width="2"/></svg>
<span class="t" style="letter-spacing:0.420px;left:162.5px;top:138.1px;font-size:28px;line-height:39px;color:#8592ad;">test01:2</span>
<div class="b" style="left:281.5px;top:143px;width:32px;height:32px;border-radius:50%;background:#4257a6;"></div>
<span class="t" style="left:288px;top:143.8px;font-size:20px;line-height:28px;color:#fff;font-weight:700;-webkit-text-stroke:0;">主</span>
<svg class="b" style="left:128px;top:178px;" width="34" height="38" viewBox="0 0 34 38"><path d="M3.5 2 V34.5 H32" fill="none" stroke="#c3cbde" stroke-width="2" stroke-dasharray="5 3.2"/></svg>
<svg class="b" style="left:163px;top:202.5px;" width="28" height="27" viewBox="0 0 28 27"><rect x="0" y="1.5" width="11.5" height="11.5" fill="#3557e4"/><rect x="0" y="15.5" width="11.5" height="11.5" fill="#3557e4"/><rect x="14.5" y="15.5" width="11.5" height="11.5" fill="#3557e4"/><path d="M20.5 0 L27 6.5 L20.5 13 L14 6.5 Z" fill="#3557e4"/></svg>
<span class="t" style="letter-spacing:-0.906px;left:208px;top:192.5px;font-size:28px;line-height:39px;color:#132039;font-weight:700;-webkit-text-stroke:0;">sys</span>
<svg class="b" style="left:357px;top:207px;" width="18" height="11" viewBox="0 0 18 11"><path d="M0 0 H18 L9 10.5 Z" fill="#b3bbd1"/></svg>
<span class="t" style="letter-spacing:-0.740px;left:162.5px;top:254.5px;font-size:28px;line-height:39px;color:#8592ad;">租户 ID: 1</span>
<div class="b" style="left:162px;top:313px;width:12px;height:12px;border-radius:50%;background:#56ba80;"></div>
<span class="t" style="left:191px;top:298.5px;font-size:28px;line-height:39px;color:#8592ad;">正常运行</span>
<div class="b" style="left:102px;top:1062px;width:299px;height:80px;border-radius:12px 0 0 12px;background:linear-gradient(90deg,#c3d3fa 0%,#d6e0fa 60%,#e9eefb 97%,#f8f9fd 100%);"></div>
<div class="b" style="left:103.2px;top:1063.2px;width:297.8px;height:77.6px;border-radius:11px 0 0 11px;background:linear-gradient(90deg,#e8edfb 0%,#eceffb 50%,#f2f4fc 97%,#f8f9fd 100%);"></div>
<span class="t" style="left:134px;top:407.5px;font-size:28px;line-height:39px;color:#132039;">概览</span>
<span class="t" style="left:134px;top:519.5px;font-size:28px;line-height:39px;color:#132039;">拓扑图</span>
<span class="t" style="left:134px;top:631.5px;font-size:28px;line-height:39px;color:#132039;">数据库管理</span>
<span class="t" style="left:134px;top:743.5px;font-size:28px;line-height:39px;color:#132039;">用户管理</span>
<span class="t" style="left:134px;top:857.5px;font-size:28px;line-height:39px;color:#132039;">性能监控</span>
<span class="t" style="left:134px;top:969.5px;font-size:28px;line-height:39px;color:#132039;">资源管理</span>
<span class="t" style="left:134px;top:1193.5px;font-size:28px;line-height:39px;color:#132039;">事务诊断</span>
<span class="t" style="left:134px;top:1305.5px;font-size:28px;line-height:39px;color:#132039;">会话管理</span>
<span class="t" style="left:134px;top:1419.5px;font-size:28px;line-height:39px;color:#132039;">备份恢复</span>
<span class="t" style="left:134px;top:1531.5px;font-size:28px;line-height:39px;color:#132039;">参数管理</span>
<span class="t" style="letter-spacing:-0.474px;left:134.5px;top:1081.5px;font-size:28px;line-height:39px;color:#132039;font-weight:700;-webkit-text-stroke:0;">SQL 诊断</span>
<div class="b" style="left:134px;top:820px;width:186px;height:2px;background:linear-gradient(90deg,#c3cbde 0%,#d5dbea 55%,rgba(213,219,234,0) 100%);"></div>
<div class="b" style="left:134px;top:1382px;width:186px;height:2px;background:linear-gradient(90deg,#c3cbde 0%,#d5dbea 55%,rgba(213,219,234,0) 100%);"></div>
<div class="b" style="left:0px;top:0px;width:3514px;height:86px;background:#f8f9fd;"></div>
<div class="b" style="left:0px;top:86px;width:3514px;height:2px;background:#dfe5f1;"></div>
<svg class="b" style="left:34px;top:16px;" width="50" height="48" viewBox="0 0 50 48"><path d="M25 0 L49 14.4 L25 28.5 L0.4 14.4 Z M25 9.5 L15.3 14.9 L25 20 L34.6 14.9 Z" fill="#2670f7" fill-rule="evenodd"/><path d="M0.4 14.4 L8.3 10 L15.6 14.7 L9.5 18.6 Z" fill="#0a0f2c"/><path d="M0.4 32.2 L8 28.2 L25 36.8 L42.5 28.2 L49 32.2 L25 47.3 Z" fill="#2670f7"/></svg>
<span class="t" style="transform-origin:0 50%;transform:scaleX(0.8834);left:96.5px;top:17.5px;font-size:32px;line-height:45px;color:#0b1330;font-weight:700;-webkit-text-stroke:0;">OceanBase</span>
<span class="t" style="left:257px;top:20.5px;font-size:28px;line-height:39px;color:#0b1330;font-weight:700;-webkit-text-stroke:0;letter-spacing:-0.3px;">云平台</span>
<svg class="b" style="left:2724px;top:28px;" width="22" height="26" viewBox="0 0 22 26"><path d="M4.4 20.5 V11.4 a6.6 6.6 0 0 1 13.2 0 V20.5 M2 20.6 H20 M11 1.6 V4.6" fill="none" stroke="#8391b0" stroke-width="2"/><path d="M8.6 22.6 a2.5 2.5 0 0 0 4.8 0" fill="none" stroke="#8391b0" stroke-width="2"/></svg>
<span class="t" style="left:2764px;top:24px;font-size:24px;line-height:34px;color:#132039;">告警</span>
<svg class="b" style="left:2875px;top:30px;" width="24" height="22" viewBox="0 0 24 22"><path d="M6 3 H23 M6 10.7 H23 M6 18.4 H23" stroke="#8391b0" stroke-width="2"/><path d="M1 3 H3.6 M1 10.7 H3.6 M1 18.4 H3.6" stroke="#8391b0" stroke-width="2"/></svg>
<span class="t" style="left:2916px;top:24px;font-size:24px;line-height:34px;color:#132039;">任务中心</span>
<svg class="b" style="left:3060px;top:27px;" width="22" height="26" viewBox="0 0 22 26"><path d="M7.5 17.2 C6.4 14.6 2.9 13.6 2.9 9.4 a8.1 8.1 0 0 1 16.2 0 C19.1 13.6 15.6 14.6 14.5 17.2 V18.8 H7.5 Z" fill="none" stroke="#132039" stroke-width="2"/><path d="M7 23.4 H15" stroke="#132039" stroke-width="2"/></svg>
<span class="t" style="left:3099px;top:24px;font-size:24px;line-height:34px;color:#132039;">帮助</span>
<svg class="b" style="left:3194px;top:27px;" width="26" height="26" viewBox="0 0 26 26"><circle cx="13" cy="13" r="11.3" fill="none" stroke="#132039" stroke-width="2"/><ellipse cx="13" cy="13" rx="5" ry="11.3" fill="none" stroke="#132039" stroke-width="1.7"/><path d="M13 1.7 V24.3 M2 9 H24 M2 17 H24" stroke="#132039" stroke-width="1.7"/></svg>
<span class="t" style="left:3236px;top:24px;font-size:24px;line-height:34px;color:#132039;">中文</span>
<div class="b" style="left:3331.5px;top:16.5px;width:160px;height:47px;box-sizing:border-box;border:2px solid #cfd6e5;border-radius:24px;background:#fff;"></div>
<svg class="b" style="left:3358px;top:29px;" width="22" height="24" viewBox="0 0 22 24"><circle cx="11" cy="7.4" r="5.7" fill="none" stroke="#132039" stroke-width="2.2"/><path d="M2.2 22.8 a8.8 9 0 0 1 17.6 0" fill="none" stroke="#132039" stroke-width="2.2"/></svg>
<span class="t" style="letter-spacing:0.425px;left:3397.5px;top:25px;font-size:24px;line-height:34px;color:#132039;">admin</span>
<div class="b" style="left:497.5px;top:420px;width:615.5px;height:96px;box-sizing:border-box;border:6px solid #e8321f;border-radius:9px;filter:drop-shadow(2.5px 3px 2.5px rgba(0,0,0,.36));"></div>
<span class="t" style="letter-spacing:-0.108px;left:1179px;top:460px;font-size:40px;line-height:56px;color:#e8321f;-webkit-text-stroke:0.3px #e8321f;">Step 2: 设置高级过滤条件,<span style="display:inline-block;width:29px"></span>总重试次数&gt;0</span>
<div class="b" style="left:107.5px;top:1054px;width:189.2px;height:94px;box-sizing:border-box;border:6px solid #e8321f;border-radius:9px;filter:drop-shadow(2.5px 3px 2.5px rgba(0,0,0,.36));"></div>
<span class="t" style="letter-spacing:0.198px;left:348.5px;top:1082px;font-size:38.5px;line-height:54px;color:#e8321f;-webkit-text-stroke:0.3px #e8321f;">Step 1</span>
<div class="b" style="left:3299px;top:583px;width:174.7px;height:99.3px;box-sizing:border-box;border:6px solid #e8321f;border-radius:9px;filter:drop-shadow(2.5px 3px 2.5px rgba(0,0,0,.36));"></div>
<span class="t" style="letter-spacing:-0.080px;left:3199px;top:466px;font-size:40px;line-height:56px;color:#e8321f;-webkit-text-stroke:0.3px #e8321f;">Step 3: 列管理</span>
<span class="t" style="left:3199px;top:521px;font-size:40px;line-height:56px;color:#e8321f;-webkit-text-stroke:0.3px #e8321f;">勾选重试次数</span>
<span class="t" style="left:3199px;top:576.5px;font-size:40px;line-height:56px;color:#e8321f;-webkit-text-stroke:0.3px #e8321f;">排序</span>
<div class="b" style="left:3364px;top:1436px;width:112px;height:112px;border-radius:50%;background:#fff;box-shadow:0 12px 40px rgba(30,40,80,.13),0 3px 10px rgba(30,40,80,.05);"></div>
<svg class="b" style="left:3395px;top:1467px;" width="50" height="50" viewBox="0 0 50 50"><circle cx="25" cy="25" r="21.3" fill="none" stroke="#5f6c90" stroke-width="3.9"/><path d="M25 12.5 V26.5 L33.5 32" fill="none" stroke="#5f6c90" stroke-width="3.9"/></svg>
</div>
</body></html>
